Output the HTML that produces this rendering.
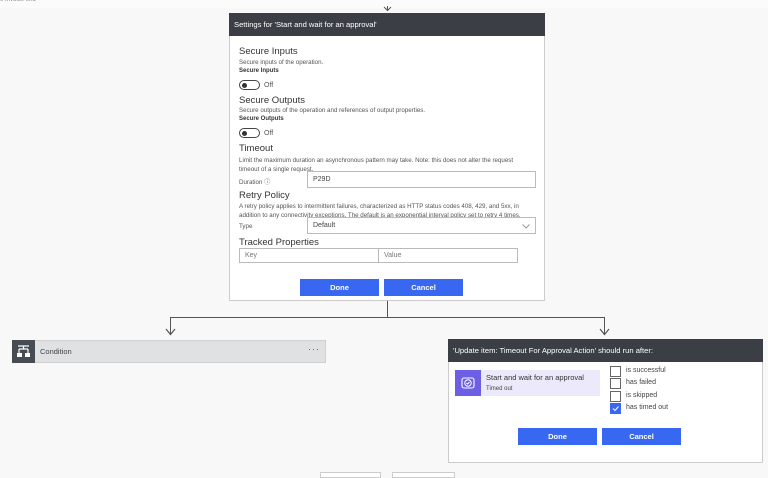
<!DOCTYPE html>
<html><head><style>
*{box-sizing:border-box;margin:0;padding:0}
body{width:768px;height:476px;background:#f8f8f8;font-family:"Liberation Sans",sans-serif;position:relative;overflow:hidden;color:#333}
.a{position:absolute}
.h{font-size:9.5px;color:#333}
.d{font-size:6.2px;color:#555}
.b{font-size:6px;font-weight:bold;color:#333}
.btn{position:absolute;background:#3867f2;color:#fff;font-size:7.5px;font-weight:bold;text-align:center;line-height:17px;height:17px;width:79px}
.inp{position:absolute;border:1px solid #bbb;background:#fff;font-size:7px;color:#444;padding-left:5px}
.tog{position:absolute;width:21px;height:10px;border:1px solid #444;border-radius:6px;background:#fff}
.tog:after{content:"";position:absolute;left:2px;top:1.5px;width:5px;height:5px;border-radius:50%;background:#333}
.cb{position:absolute;left:610px;width:11px;height:11px;border:1px solid #666;background:#fff}
.cl{position:absolute;left:626px;font-size:7px;color:#444}
</style></head><body>
<div class="a" style="left:0;top:0;width:768px;height:8px;background:#fbfbfb"></div>
<div class="a" style="left:0;top:-3px;font-size:6px;color:#888">e Invoice end</div>
<svg class="a" style="left:383px;top:6px" width="9" height="7"><path d="M1 1l3.5 3.5L8 1M4.5 0v5" stroke="#555" fill="none"/></svg>
<!-- settings panel -->
<div class="a" style="left:229px;top:13px;width:316px;height:288px;background:#fff;border:1px solid #ccc"></div>
<div class="a" style="left:229px;top:13px;width:316px;height:23px;background:#3b3f45;color:#fff;font-size:7.6px;line-height:23px;padding-left:5px">Settings for 'Start and wait for an approval'</div>
<div class="a h" style="left:239px;top:46px">Secure Inputs</div>
<div class="a d" style="left:239px;top:59px">Secure inputs of the operation.</div>
<div class="a b" style="left:239px;top:68px">Secure Inputs</div>
<div class="tog" style="left:239px;top:80px"></div><div class="a d" style="left:264px;top:82px;font-size:7px">Off</div>
<div class="a h" style="left:239px;top:95px">Secure Outputs</div>
<div class="a d" style="left:239px;top:107px">Secure outputs of the operation and references of output properties.</div>
<div class="a b" style="left:239px;top:116px">Secure Outputs</div>
<div class="tog" style="left:239px;top:128px"></div><div class="a d" style="left:264px;top:130px;font-size:7px">Off</div>
<div class="a h" style="left:239px;top:143px">Timeout</div>
<div class="a d" style="left:239px;top:156px;line-height:9px">Limit the maximum duration an asynchronous pattern may take. Note: this does not alter the request<br>timeout of a single request.</div>
<div class="a d" style="left:239px;top:177px">Duration ⓘ</div>
<div class="inp" style="left:307px;top:171px;width:229px;height:17px;line-height:15px">P29D</div>
<div class="a h" style="left:239px;top:190px">Retry Policy</div>
<div class="a d" style="left:239px;top:202px;line-height:9px">A retry policy applies to intermittent failures, characterized as HTTP status codes 408, 429, and 5xx, in<br>addition to any connectivity exceptions. The default is an exponential interval policy set to retry 4 times.</div>
<div class="a d" style="left:239px;top:223px">Type</div>
<div class="inp" style="left:307px;top:217px;width:229px;height:17px;line-height:15px">Default<svg style="position:absolute;right:5px;top:6px" width="8" height="5"><path d="M0.5 0.5l3.5 3.5 3.5-3.5" stroke="#999" fill="none"/></svg></div>
<div class="a h" style="left:239px;top:237px">Tracked Properties</div>
<div class="inp" style="left:239px;top:248px;width:140px;height:15px;line-height:13px;color:#777">Key</div>
<div class="inp" style="left:378px;top:248px;width:140px;height:15px;line-height:13px;color:#777">Value</div>
<div class="btn" style="left:300px;top:279px">Done</div>
<div class="btn" style="left:384px;top:279px">Cancel</div>
<!-- connectors -->
<div class="a" style="left:387px;top:301px;width:1px;height:17px;background:#555"></div>
<div class="a" style="left:170px;top:317px;width:435px;height:1px;background:#555"></div>
<div class="a" style="left:170px;top:317px;width:1px;height:18px;background:#555"></div>
<div class="a" style="left:604px;top:317px;width:1px;height:18px;background:#555"></div>
<svg class="a" style="left:165px;top:328px" width="11" height="8"><path d="M1 1l4.5 5.5L10 1" stroke="#555" fill="none" stroke-width="1.2"/></svg>
<svg class="a" style="left:599px;top:328px" width="11" height="8"><path d="M1 1l4.5 5.5L10 1" stroke="#555" fill="none" stroke-width="1.2"/></svg>
<!-- condition -->
<div class="a" style="left:12px;top:340px;width:314px;height:23px;background:#e0e1e2;border:1px solid #d0d0d0"></div>
<div class="a" style="left:12px;top:340px;width:23px;height:23px;background:#474b53"></div>
<svg class="a" style="left:16px;top:344px" width="15" height="15" viewBox="0 0 15 15"><path d="M2 2h11M7.5 2v3M3 5h9M3 5v4M12 5v4" stroke="#fff" fill="none" stroke-width="1.2"/><rect x="1" y="9" width="5" height="4" fill="#fff"/><rect x="9" y="9" width="5" height="4" fill="#fff"/></svg>
<div class="a" style="left:40px;top:347px;font-size:7.5px;color:#444">Condition</div>
<div class="a" style="left:308px;top:344px;font-size:9px;color:#555;letter-spacing:1px">···</div>
<!-- run after -->
<div class="a" style="left:448px;top:339px;width:315px;height:124px;background:#fff;border:1px solid #ccc"></div>
<div class="a" style="left:448px;top:339px;width:315px;height:23px;background:#3b3f45;color:#fff;font-size:7.6px;line-height:23px;padding-left:5px">'Update item: Timeout For Approval Action' should run after:</div>
<div class="a" style="left:455px;top:370px;width:145px;height:26px;background:#ece9fb"></div>
<div class="a" style="left:455px;top:370px;width:26px;height:26px;background:#6c5fe6"></div>
<svg class="a" style="left:460px;top:375px" width="16" height="16" viewBox="0 0 16 16"><rect x="2" y="3" width="12" height="10" rx="2" fill="none" stroke="#fff" stroke-width="1.1"/><circle cx="8" cy="8" r="3.2" fill="none" stroke="#fff" stroke-width="1"/><path d="M6.5 8l1 1 2-2" stroke="#fff" fill="none" stroke-width="1"/></svg>
<div class="a" style="left:486px;top:373px;font-size:7.5px;color:#333">Start and wait for an approval</div>
<div class="a" style="left:486px;top:386px;font-size:6px;color:#444">Timed out</div>
<div class="cb" style="top:366px"></div><div class="cl" style="top:367px">is successful</div>
<div class="cb" style="top:378px"></div><div class="cl" style="top:379px">has failed</div>
<div class="cb" style="top:391px"></div><div class="cl" style="top:392px">is skipped</div>
<div class="cb" style="top:403px;background:#3867f2;border-color:#3867f2"><svg width="9" height="9" style="position:absolute;left:0;top:0"><path d="M2 4.5l2 2 3.5-4" stroke="#fff" fill="none" stroke-width="1"/></svg></div><div class="cl" style="top:404px">has timed out</div>
<div class="btn" style="left:518px;top:428px">Done</div>
<div class="btn" style="left:602px;top:428px">Cancel</div>
<div class="a" style="left:320px;top:472px;width:61px;height:6px;border:1px solid #ccc;background:#fff"></div>
<div class="a" style="left:392px;top:472px;width:63px;height:6px;border:1px solid #ccc;background:#fff"></div>
</body></html>
